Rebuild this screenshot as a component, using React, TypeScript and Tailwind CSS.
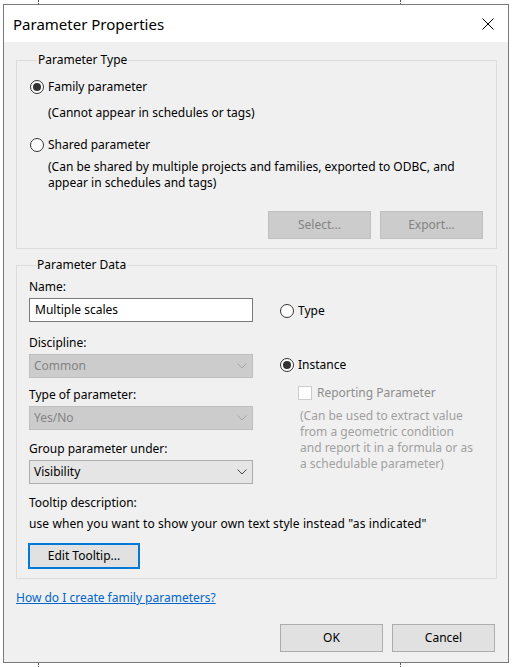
import React from "react";

function Radio({ checked }: { checked?: boolean }) {
  return (
    <span className="w-[14px] h-[14px] rounded-full border border-[#333333] bg-white flex items-center justify-center shrink-0">
      {checked && <span className="w-[8px] h-[8px] rounded-full bg-[#333333]" />}
    </span>
  );
}

function Chevron({ color }: { color: string }) {
  return (
    <svg width="10" height="6" viewBox="0 0 10 6" className="shrink-0">
      <path d="M0.5 0.5 L5 5 L9.5 0.5" fill="none" stroke={color} strokeWidth="1" />
    </svg>
  );
}

function Combo({ value, disabled }: { value: string; disabled?: boolean }) {
  return (
    <div
      className={
        disabled
          ? "w-[224px] h-[24px] border border-[#bfbfbf] bg-[#cccccc] text-[#838383] flex items-center justify-between pl-[4px] pr-[5px]"
          : "w-[224px] h-[24px] border border-[#adadad] bg-[#e5e5e5] text-black flex items-center justify-between pl-[4px] pr-[5px]"
      }
    >
      <span>{value}</span>
      <Chevron color={disabled ? "#a6a6a6" : "#444444"} />
    </div>
  );
}

function Btn({ label, disabled }: { label: string; disabled?: boolean }) {
  return (
    <div
      className={
        disabled
          ? "w-[103px] h-[28px] border border-[#bfbfbf] bg-[#cccccc] text-[#838383] flex items-center justify-center"
          : "w-[103px] h-[28px] border border-[#adadad] bg-[#e1e1e1] text-black flex items-center justify-center"
      }
    >
      {label}
    </div>
  );
}

export default function App() {
  return (
    <div className="w-[515px] h-[667px] bg-white font-['Noto_Sans',sans-serif] text-[12px] leading-[16px] text-black overflow-hidden">
      <div className="h-[4px] flex">
        <div className="w-[38px]" />
        <div className="border-l border-dotted border-[#555555]" />
        <div className="w-[361px]" />
        <div className="border-l border-dotted border-[#555555]" />
      </div>
      <div className="ml-[3px] w-[506px] h-[659px] border border-[#7a7a7a] bg-[#f0f0f0] flex flex-col">
        <div className="h-[37px] bg-white flex items-center justify-between pl-[9px] pr-[14px]">
          <span className="text-[15px] leading-[20px] mt-[1px]">Parameter Properties</span>
          <svg width="12" height="12" viewBox="0 0 12 12">
            <path d="M0.5 0.5 L11.5 11.5 M11.5 0.5 L0.5 11.5" stroke="#000" strokeWidth="1" />
          </svg>
        </div>

        <fieldset className="mt-[10px] ml-[12px] w-[481px] border border-[#dcdcdc] pl-[13px] pr-[13px] pb-[9px]">
          <legend className="ml-[7px] px-[1px] leading-[16px]">Parameter Type</legend>
          <div className="mt-[11px] flex items-center h-[16px]">
            <Radio checked />
            <span className="ml-[4px]">Family parameter</span>
          </div>
          <div className="mt-[10px] ml-[18px] h-[16px]">(Cannot appear in schedules or tags)</div>
          <div className="mt-[16px] flex items-center h-[16px]">
            <Radio />
            <span className="ml-[4px]">Shared parameter</span>
          </div>
          <div className="mt-[6px] ml-[18px]">
            (Can be shared by multiple projects and families, exported to ODBC, and
            <br />
            appear in schedules and tags)
          </div>
          <div className="mt-[20px] flex justify-end gap-[9px]">
            <Btn label="Select..." disabled />
            <Btn label="Export..." disabled />
          </div>
        </fieldset>

        <fieldset className="mt-[8px] ml-[12px] w-[481px] h-[322px] border border-[#dcdcdc] pl-[12px]">
          <legend className="ml-[7px] px-[1px] leading-[16px]">Parameter Data</legend>
          <div className="flex">
            <div className="w-[224px] flex flex-col">
              <div className="mt-[6px]">Name:</div>
              <div className="mt-[3px] w-[224px] h-[24px] border border-[#7a7a7a] bg-white flex items-center pl-[5px]">
                Multiple scales
              </div>
              <div className="mt-[13px]">Discipline:</div>
              <div className="mt-[3px]">
                <Combo value="Common" disabled />
              </div>
              <div className="mt-[9px]">Type of parameter:</div>
              <div className="mt-[3px]">
                <Combo value="Yes/No" disabled />
              </div>
              <div className="mt-[11px]">Group parameter under:</div>
              <div className="mt-[3px]">
                <Combo value="Visibility" />
              </div>
            </div>
            <div className="ml-[27px] flex flex-col">
              <div className="mt-[30px] flex items-center h-[16px]">
                <Radio />
                <span className="ml-[4px]">Type</span>
              </div>
              <div className="mt-[38px] flex items-center h-[16px]">
                <Radio checked />
                <span className="ml-[4px]">Instance</span>
              </div>
              <div className="mt-[12px] ml-[18px] flex items-center h-[16px]">
                <span className="w-[14px] h-[14px] border border-[#cccccc] bg-white shrink-0" />
                <span className="ml-[5px] text-[#8d8d8d]">Reporting Parameter</span>
              </div>
              <div className="mt-[7px] ml-[20px] text-[#a0a0a0]">
                (Can be used to extract value
                <br />
                from a geometric condition
                <br />
                and report it in a formula or as
                <br />a schedulable parameter)
              </div>
            </div>
          </div>
          <div className="mt-[11px]">Tooltip description:</div>
          <div className="mt-[5px] tracking-[0.1px]">use when you want to show your own text style instead "as indicated"</div>
          <div className="mt-[11px] -ml-[1px] w-[112px] h-[26px] border-2 border-[#0078d7] bg-[#e1e1e1] flex items-center justify-center">
            Edit Tooltip...
          </div>
        </fieldset>

        <div className="mt-[11px] ml-[12px] text-[#0066cc] underline h-[16px]">How do I create family parameters?</div>

        <div className="mt-[18px] flex justify-end gap-[9px] pr-[13px]">
          <Btn label="OK" />
          <Btn label="Cancel" />
        </div>
      </div>
      <div className="h-[4px] flex">
        <div className="w-[38px]" />
        <div className="border-l border-dotted border-[#555555]" />
        <div className="w-[361px]" />
        <div className="border-l border-dotted border-[#555555]" />
      </div>
    </div>
  );
}
